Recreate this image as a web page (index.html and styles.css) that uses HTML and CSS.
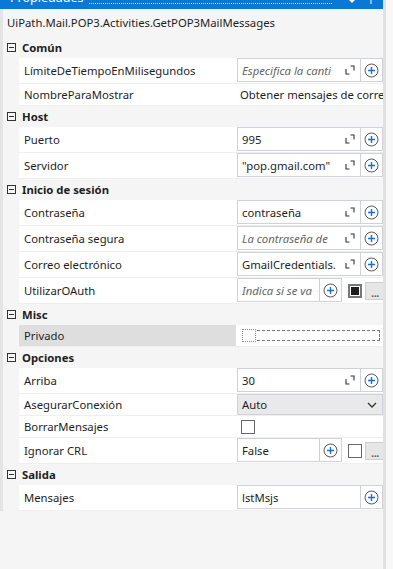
FILE: index.html
```html
<!DOCTYPE html>
<html lang="es">
<head>
  <meta charset="UTF-8" />
  <meta name="viewport" content="width=device-width, initial-scale=1.0" />
  <title>Propiedades</title>
  <link rel="stylesheet" href="styles.css">
</head>
<body>
  <div class="window">
    <main class="pane">
      <header class="titlebar">
        <span class="title">Propiedades</span>
        <span class="grip"></span>
        <svg class="tb-icon" width="10" height="9" viewBox="0 0 10 9"><path d="M2 0 L5 3 L8 0" fill="#fff"/></svg>
        <svg class="tb-icon" width="10" height="9" viewBox="0 0 10 9"><path d="M5 0 V4" stroke="#fff" stroke-width="1"/></svg>
      </header>

      <div class="content">
        <div class="subject">UiPath.Mail.POP3.Activities.GetPOP3MailMessages</div>

        <section class="group">
          <div class="group-head">
            <svg class="toggle" width="9" height="9" viewBox="0 0 9 9"><rect x="0.5" y="0.5" width="8" height="8" fill="none" stroke="#333"/><path d="M2 4.5 H7" stroke="#333"/></svg>
            <span>Común</span>
          </div>
          <div class="row tall">
            <div class="label">LímiteDeTiempoEnMilisegundos</div>
            <div class="value">
              <div class="field">
                <span class="text hint">Especifica la canti</span>
                <svg class="expand" width="10" height="10" viewBox="0 0 10 10"><path d="M1 4 V9 H4.5 M5.5 1 H9 V5.5" fill="none" stroke="#333" stroke-width="1.1"/></svg>
                <span class="plus"><svg width="15" height="15" viewBox="0 0 15 15"><circle cx="7.5" cy="7.5" r="6.5" fill="none" stroke="#555"/><path d="M7.5 4 V11 M4 7.5 H11" stroke="#1570d8" stroke-width="1.4"/></svg></span>
              </div>
            </div>
          </div>
          <div class="row">
            <div class="label">NombreParaMostrar</div>
            <div class="value"><span class="plain">Obtener mensajes de corre</span></div>
          </div>
        </section>

        <section class="group">
          <div class="group-head">
            <svg class="toggle" width="9" height="9" viewBox="0 0 9 9"><rect x="0.5" y="0.5" width="8" height="8" fill="none" stroke="#333"/><path d="M2 4.5 H7" stroke="#333"/></svg>
            <span>Host</span>
          </div>
          <div class="row tall">
            <div class="label">Puerto</div>
            <div class="value">
              <div class="field">
                <span class="text">995</span>
                <svg class="expand" width="10" height="10" viewBox="0 0 10 10"><path d="M1 4 V9 H4.5 M5.5 1 H9 V5.5" fill="none" stroke="#333" stroke-width="1.1"/></svg>
                <span class="plus"><svg width="15" height="15" viewBox="0 0 15 15"><circle cx="7.5" cy="7.5" r="6.5" fill="none" stroke="#555"/><path d="M7.5 4 V11 M4 7.5 H11" stroke="#1570d8" stroke-width="1.4"/></svg></span>
              </div>
            </div>
          </div>
          <div class="row tall">
            <div class="label">Servidor</div>
            <div class="value">
              <div class="field">
                <span class="text">"pop.gmail.com"</span>
                <svg class="expand" width="10" height="10" viewBox="0 0 10 10"><path d="M1 4 V9 H4.5 M5.5 1 H9 V5.5" fill="none" stroke="#333" stroke-width="1.1"/></svg>
                <span class="plus"><svg width="15" height="15" viewBox="0 0 15 15"><circle cx="7.5" cy="7.5" r="6.5" fill="none" stroke="#555"/><path d="M7.5 4 V11 M4 7.5 H11" stroke="#1570d8" stroke-width="1.4"/></svg></span>
              </div>
            </div>
          </div>
        </section>

        <section class="group">
          <div class="group-head">
            <svg class="toggle" width="9" height="9" viewBox="0 0 9 9"><rect x="0.5" y="0.5" width="8" height="8" fill="none" stroke="#333"/><path d="M2 4.5 H7" stroke="#333"/></svg>
            <span>Inicio de sesión</span>
          </div>
          <div class="row tall">
            <div class="label">Contraseña</div>
            <div class="value">
              <div class="field">
                <span class="text">contraseña</span>
                <svg class="expand" width="10" height="10" viewBox="0 0 10 10"><path d="M1 4 V9 H4.5 M5.5 1 H9 V5.5" fill="none" stroke="#333" stroke-width="1.1"/></svg>
                <span class="plus"><svg width="15" height="15" viewBox="0 0 15 15"><circle cx="7.5" cy="7.5" r="6.5" fill="none" stroke="#555"/><path d="M7.5 4 V11 M4 7.5 H11" stroke="#1570d8" stroke-width="1.4"/></svg></span>
              </div>
            </div>
          </div>
          <div class="row tall">
            <div class="label">Contraseña segura</div>
            <div class="value">
              <div class="field">
                <span class="text hint">La contraseña de</span>
                <svg class="expand" width="10" height="10" viewBox="0 0 10 10"><path d="M1 4 V9 H4.5 M5.5 1 H9 V5.5" fill="none" stroke="#333" stroke-width="1.1"/></svg>
                <span class="plus"><svg width="15" height="15" viewBox="0 0 15 15"><circle cx="7.5" cy="7.5" r="6.5" fill="none" stroke="#555"/><path d="M7.5 4 V11 M4 7.5 H11" stroke="#1570d8" stroke-width="1.4"/></svg></span>
              </div>
            </div>
          </div>
          <div class="row tall">
            <div class="label">Correo electrónico</div>
            <div class="value">
              <div class="field">
                <span class="text">GmailCredentials.</span>
                <svg class="expand" width="10" height="10" viewBox="0 0 10 10"><path d="M1 4 V9 H4.5 M5.5 1 H9 V5.5" fill="none" stroke="#333" stroke-width="1.1"/></svg>
                <span class="plus"><svg width="15" height="15" viewBox="0 0 15 15"><circle cx="7.5" cy="7.5" r="6.5" fill="none" stroke="#555"/><path d="M7.5 4 V11 M4 7.5 H11" stroke="#1570d8" stroke-width="1.4"/></svg></span>
              </div>
            </div>
          </div>
          <div class="row tall">
            <div class="label">UtilizarOAuth</div>
            <div class="value">
              <div class="field short">
                <span class="text hint">Indica si se va</span>
                <span class="plus"><svg width="15" height="15" viewBox="0 0 15 15"><circle cx="7.5" cy="7.5" r="6.5" fill="none" stroke="#555"/><path d="M7.5 4 V11 M4 7.5 H11" stroke="#1570d8" stroke-width="1.4"/></svg></span>
              </div>
              <span class="check on"></span>
              <span class="more">...</span>
            </div>
          </div>
        </section>

        <section class="group">
          <div class="group-head">
            <svg class="toggle" width="9" height="9" viewBox="0 0 9 9"><rect x="0.5" y="0.5" width="8" height="8" fill="none" stroke="#333"/><path d="M2 4.5 H7" stroke="#333"/></svg>
            <span>Misc</span>
          </div>
          <div class="row selected">
            <div class="label">Privado</div>
            <div class="value">
              <div class="focus"><span class="check small"></span></div>
            </div>
          </div>
        </section>

        <section class="group">
          <div class="group-head">
            <svg class="toggle" width="9" height="9" viewBox="0 0 9 9"><rect x="0.5" y="0.5" width="8" height="8" fill="none" stroke="#333"/><path d="M2 4.5 H7" stroke="#333"/></svg>
            <span>Opciones</span>
          </div>
          <div class="row tall">
            <div class="label">Arriba</div>
            <div class="value">
              <div class="field">
                <span class="text">30</span>
                <svg class="expand" width="10" height="10" viewBox="0 0 10 10"><path d="M1 4 V9 H4.5 M5.5 1 H9 V5.5" fill="none" stroke="#333" stroke-width="1.1"/></svg>
                <span class="plus"><svg width="15" height="15" viewBox="0 0 15 15"><circle cx="7.5" cy="7.5" r="6.5" fill="none" stroke="#555"/><path d="M7.5 4 V11 M4 7.5 H11" stroke="#1570d8" stroke-width="1.4"/></svg></span>
              </div>
            </div>
          </div>
          <div class="row">
            <div class="label">AsegurarConexión</div>
            <div class="value">
              <div class="select">
                <span>Auto</span>
                <svg width="10" height="6" viewBox="0 0 10 6"><path d="M1 1 L5 5 L9 1" fill="none" stroke="#333" stroke-width="1.3"/></svg>
              </div>
            </div>
          </div>
          <div class="row">
            <div class="label">BorrarMensajes</div>
            <div class="value"><span class="check"></span></div>
          </div>
          <div class="row tall">
            <div class="label">Ignorar CRL</div>
            <div class="value">
              <div class="field short">
                <span class="text">False</span>
                <span class="plus"><svg width="15" height="15" viewBox="0 0 15 15"><circle cx="7.5" cy="7.5" r="6.5" fill="none" stroke="#555"/><path d="M7.5 4 V11 M4 7.5 H11" stroke="#1570d8" stroke-width="1.4"/></svg></span>
              </div>
              <span class="check"></span>
              <span class="more">...</span>
            </div>
          </div>
        </section>

        <section class="group">
          <div class="group-head">
            <svg class="toggle" width="9" height="9" viewBox="0 0 9 9"><rect x="0.5" y="0.5" width="8" height="8" fill="none" stroke="#333"/><path d="M2 4.5 H7" stroke="#333"/></svg>
            <span>Salida</span>
          </div>
          <div class="row tall">
            <div class="label">Mensajes</div>
            <div class="value">
              <div class="field">
                <span class="text">lstMsjs</span>
                <span class="plus"><svg width="15" height="15" viewBox="0 0 15 15"><circle cx="7.5" cy="7.5" r="6.5" fill="none" stroke="#555"/><path d="M7.5 4 V11 M4 7.5 H11" stroke="#1570d8" stroke-width="1.4"/></svg></span>
              </div>
            </div>
          </div>
        </section>
      </div>
    </main>
    <div class="scrollbar"></div>
  </div>
</body>
</html>
```

FILE: styles.css
```css
* {
  box-sizing: border-box;
}

body {
  margin: 0;
  background: #f5f5f5;
  font-family: 'Noto Sans', 'Open Sans', sans-serif;
  font-size: 11.3px;
  color: #1e1e1e;
}

.window {
  display: flex;
  height: 569px;
  overflow: hidden;
}

.pane {
  width: 383px;
  flex-shrink: 0;
}

.scrollbar {
  flex: 1;
  border-left: 3px solid #e1e1e1;
  background: #f8f8f8;
}

/* title bar, mostly scrolled out of view */
.titlebar {
  display: flex;
  align-items: flex-start;
  height: 9px;
  overflow: hidden;
  background: #0b78d6;
  color: #fff;
  padding: 0 7px 0 10px;
}

.title {
  font-size: 12.5px;
  line-height: 16px;
  margin-top: -10px;
}

.grip {
  flex: 1;
  margin: 3px 6px 0;
  border-top: 1px dotted rgba(255, 255, 255, 0.8);
}

.tb-icon {
  margin-left: 9px;
}

.content {
  border-left: 3px solid #e4e4e4;
}

.subject {
  height: 28px;
  line-height: 28px;
  padding-left: 4px;
  white-space: nowrap;
}

.group-head {
  display: flex;
  align-items: center;
  gap: 6px;
  height: 21px;
  padding-left: 4px;
  font-weight: 700;
}

.row {
  display: grid;
  grid-template-columns: 217px 1fr;
  height: 22px;
  margin-left: 16px;
  border-bottom: 1px solid #efefef;
}

.row.tall {
  height: 26px;
}

.label {
  display: flex;
  align-items: center;
  padding-left: 5px;
  background: #fff;
  white-space: nowrap;
  overflow: hidden;
}

.row.selected .label {
  background: #dedede;
}

.value {
  display: flex;
  align-items: center;
  gap: 3px;
  padding-left: 1px;
  background: #fff;
  overflow: hidden;
}

.row.tall .value {
  align-items: flex-start;
}

.row.tall .value > .check,
.row.tall .value > .more {
  align-self: center;
}

.plain {
  padding-left: 3px;
  white-space: nowrap;
}

.field {
  display: flex;
  align-items: center;
  width: 146px;
  height: 24px;
  border: 1px solid #cfd3d8;
  background: #fff;
  flex-shrink: 0;
}

.field.short {
  width: 105px;
}

.text {
  flex: 1;
  min-width: 0;
  padding-left: 4px;
  white-space: nowrap;
  overflow: hidden;
}

.hint {
  font-style: italic;
  color: #666;
}

.expand {
  margin: 0 5px 0 6px;
  flex-shrink: 0;
}

.plus {
  display: flex;
  align-items: center;
  justify-content: center;
  width: 22px;
  height: 100%;
  border-left: 1px solid #cfd3d8;
  flex-shrink: 0;
}

.check {
  width: 14px;
  height: 14px;
  border: 1px solid #666;
  background: #fff;
  flex-shrink: 0;
  margin-left: 4px;
}

.check.on {
  border: 2px solid #777;
  padding: 1px;
  background: #1e1e1e content-box;
}

.field.short + .check {
  margin-left: 3px;
}

.more {
  width: 20px;
  height: 18px;
  border: 1px solid #cccccc;
  background: #e6e6e6;
  color: #666;
  font-size: 11px;
  font-weight: 700;
  line-height: 20px;
  text-align: center;
  letter-spacing: -0.5px;
  flex-shrink: 0;
}

.focus {
  display: flex;
  align-items: center;
  width: 138px;
  height: 11px;
  margin-left: 5px;
  border: 1px dashed #777;
}

.check.small {
  width: 14px;
  height: 13px;
  margin-left: -1px;
  border-color: #888;
  border-style: dotted;
}

.select {
  display: flex;
  align-items: center;
  justify-content: space-between;
  width: 146px;
  height: 21px;
  padding: 0 5px 0 4px;
  border: 1px solid #cfd3d8;
  background: #e9e9e9;
}
```
